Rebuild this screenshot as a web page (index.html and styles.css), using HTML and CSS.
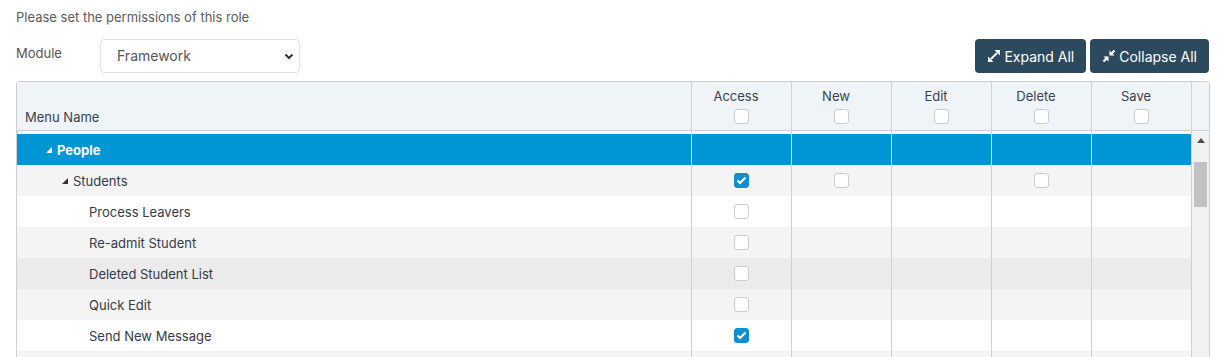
FILE: index.html
```html
<!DOCTYPE html>
<html>
<head>
<meta charset="utf-8">
<link rel="stylesheet" href="styles.css">
</head>
<body>
<div class="page">
  <p class="intro">Please set the permissions of this role</p>
  <div class="toolbar">
    <span class="label">Module</span>
    <div class="select">
      <span>Framework</span>
      <svg class="chev" width="10" height="7" viewBox="0 0 10 7"><path d="M1.5 1.5 L5 5 L8.5 1.5" fill="none" stroke="#333" stroke-width="2"/></svg>
    </div>
    <div class="spacer"></div>
    <button class="btn">
      <svg width="12" height="12" viewBox="0 0 12 12"><path d="M3 9 L9 3" stroke="#fff" stroke-width="2"/><polygon points="12,0 12,5.5 6.5,0" fill="#fff"/><polygon points="0,12 0,6.5 5.5,12" fill="#fff"/></svg>
      Expand All
    </button>
    <button class="btn">
      <svg width="12" height="12" viewBox="0 0 12 12"><path d="M11.5 0.5 L7.5 4.5" stroke="#fff" stroke-width="2"/><polygon points="6.5,0.5 6.5,5.5 11.5,5.5" fill="#fff"/><path d="M0.5 11.5 L4.5 7.5" stroke="#fff" stroke-width="2"/><polygon points="5.5,11.5 5.5,6.5 0.5,6.5" fill="#fff"/></svg>
      Collapse All
    </button>
  </div>

  <div class="grid">
    <div class="head">
      <div class="hcell name">Menu Name</div>
      <div class="hcell perm"><span class="hlabel">Access</span><span class="cb"></span></div>
      <div class="hcell perm"><span class="hlabel">New</span><span class="cb"></span></div>
      <div class="hcell perm"><span class="hlabel">Edit</span><span class="cb"></span></div>
      <div class="hcell perm"><span class="hlabel">Delete</span><span class="cb"></span></div>
      <div class="hcell perm"><span class="hlabel">Save</span><span class="cb"></span></div>
      <div class="hcell scrollhead"></div>
    </div>
    <div class="body">
      <div class="rows">
        <div class="row spacer-row"><div class="cell"></div><div class="cell"></div><div class="cell"></div><div class="cell"></div><div class="cell"></div><div class="cell"></div></div>

        <div class="row selected">
          <div class="cell name lvl1"><svg class="tri" width="6" height="6" viewBox="0 0 6 6"><polygon points="6,0 6,6 0,6" fill="#fff"/></svg>People</div>
          <div class="cell"></div><div class="cell"></div><div class="cell"></div><div class="cell"></div><div class="cell"></div>
        </div>

        <div class="row alt">
          <div class="cell name lvl2"><svg class="tri" width="6" height="6" viewBox="0 0 6 6"><polygon points="6,0 6,6 0,6" fill="#333"/></svg>Students</div>
          <div class="cell"><span class="cb checked"><svg width="11" height="9" viewBox="0 0 11 9"><path d="M1.5 4.5 L4 7 L9.5 1.5" fill="none" stroke="#fff" stroke-width="2"/></svg></span></div>
          <div class="cell"><span class="cb"></span></div>
          <div class="cell"></div>
          <div class="cell"><span class="cb"></span></div>
          <div class="cell"></div>
        </div>

        <div class="row">
          <div class="cell name lvl3">Process Leavers</div>
          <div class="cell"><span class="cb"></span></div>
          <div class="cell"></div><div class="cell"></div><div class="cell"></div><div class="cell"></div>
        </div>

        <div class="row alt">
          <div class="cell name lvl3">Re-admit Student</div>
          <div class="cell"><span class="cb"></span></div>
          <div class="cell"></div><div class="cell"></div><div class="cell"></div><div class="cell"></div>
        </div>

        <div class="row hover">
          <div class="cell name lvl3">Deleted Student List</div>
          <div class="cell"><span class="cb"></span></div>
          <div class="cell"></div><div class="cell"></div><div class="cell"></div><div class="cell"></div>
        </div>

        <div class="row alt">
          <div class="cell name lvl3">Quick Edit</div>
          <div class="cell"><span class="cb"></span></div>
          <div class="cell"></div><div class="cell"></div><div class="cell"></div><div class="cell"></div>
        </div>

        <div class="row">
          <div class="cell name lvl3">Send New Message</div>
          <div class="cell"><span class="cb checked"><svg width="11" height="9" viewBox="0 0 11 9"><path d="M1.5 4.5 L4 7 L9.5 1.5" fill="none" stroke="#fff" stroke-width="2"/></svg></span></div>
          <div class="cell"></div><div class="cell"></div><div class="cell"></div><div class="cell"></div>
        </div>

        <div class="row alt">
          <div class="cell name lvl3"></div>
          <div class="cell"></div>
          <div class="cell"></div><div class="cell"></div><div class="cell"></div><div class="cell"></div>
        </div>
      </div>
      <div class="scrollbar">
        <svg class="arrow" width="8" height="5" viewBox="0 0 8 5"><polygon points="4,0 8,5 0,5" fill="#505050"/></svg>
        <div class="thumb"></div>
      </div>
    </div>
  </div>
</div>
</body>
</html>
```

FILE: styles.css
```css
html, body {
  margin: 0;
  padding: 0;
  overflow: hidden;
  background: #fff;
}
body {
  font-family: Inter, "Noto Sans", "Liberation Sans", sans-serif;
  font-size: 13px;
  color: #333;
}
.page {
  padding: 8px 9px 0 16px;
}
.intro {
  margin: 0;
  line-height: 18px;
  color: #5b5b5b;
  font-size: 13px;
}
.toolbar {
  display: flex;
  align-items: flex-start;
  margin-top: 13px;
  height: 34px;
}
.label {
  width: 84px;
  padding-top: 5px;
  line-height: 18px;
  color: #555;
}
.select {
  width: 200px;
  height: 34px;
  box-sizing: border-box;
  border: 1px solid #e2e2e2;
  border-radius: 4px;
  display: flex;
  align-items: center;
  justify-content: space-between;
  padding: 0 4px 0 16px;
  font-size: 14px;
  color: #555;
}
.select span {
  margin-top: -1px;
}
.chev {
  margin-right: 1px;
}
.spacer {
  flex: 1;
}
.btn {
  height: 34px;
  border: none;
  border-radius: 4px;
  background: #2c4a5e;
  color: #fff;
  font-family: inherit;
  font-size: 14px;
  padding: 0 12px 0 13px;
  margin-left: 4px;
  display: flex;
  align-items: center;
  gap: 4px;
}
.btn:last-child {
  margin-right: 1px;
}
.grid {
  margin-top: 8px;
  border: 1px solid #cfcfcf;
  border-radius: 3px;
  overflow: hidden;
  height: 300px;
}
.head {
  display: grid;
  grid-template-columns: 1fr repeat(5, 100px) 18px;
  background: #eff4f8;
  border-bottom: 1px solid #cfcfcf;
  height: 48px;
}
.hcell {
  box-sizing: border-box;
  border-left: 1px solid #d3d3d3;
  color: #3a4252;
}
.hcell.name {
  border-left: none;
  padding-left: 8px;
  display: flex;
  align-items: flex-end;
  padding-bottom: 4px;
  line-height: 18px;
}
.hcell.perm {
  display: flex;
  flex-direction: column;
  align-items: center;
  padding-top: 5px;
  line-height: 18px;
}
.hlabel {
  margin-right: 11px;
}
.hcell.perm .cb {
  margin-top: 4px;
}
.cb {
  display: inline-flex;
  align-items: center;
  justify-content: center;
  width: 15px;
  height: 15px;
  box-sizing: border-box;
  border: 1px solid #cccccc;
  border-radius: 3px;
  background: #fff;
}
.cb.checked {
  background: #0f8fd3;
  border-color: #0f8fd3;
}
.body {
  display: flex;
}
.rows {
  flex: 1;
}
.row {
  display: grid;
  grid-template-columns: 1fr repeat(5, 100px);
  height: 31px;
  background: #fff;
}
.row.spacer-row {
  height: 3px;
}
.row.alt {
  background: #f4f4f4;
}
.row.hover {
  background: #ebebeb;
}
.row.selected {
  background: #0096d6;
}
.cell {
  box-sizing: border-box;
  border-left: 1px solid #cfcfcf;
  display: flex;
  align-items: center;
  justify-content: center;
}
.row.selected .cell {
  border-left-color: #d6e6ef;
}
.cell.name {
  border-left: none;
  justify-content: flex-start;
  color: #363a48;
}
.cell.lvl1 {
  padding-left: 29px;
  color: #fff;
  font-weight: 700;
}
.cell.lvl2 {
  padding-left: 45px;
}
.cell.lvl3 {
  padding-left: 72px;
}
.tri {
  margin-right: 5px;
  margin-top: 1px;
}
.scrollbar {
  width: 18px;
  box-sizing: border-box;
  border-left: 1px solid #cfcfcf;
  background: #f1f1f1;
  display: flex;
  flex-direction: column;
  align-items: center;
}
.arrow {
  margin-top: 7px;
}
.thumb {
  width: 13px;
  height: 45px;
  background: #c1c1c1;
  margin-top: 19px;
}
```
